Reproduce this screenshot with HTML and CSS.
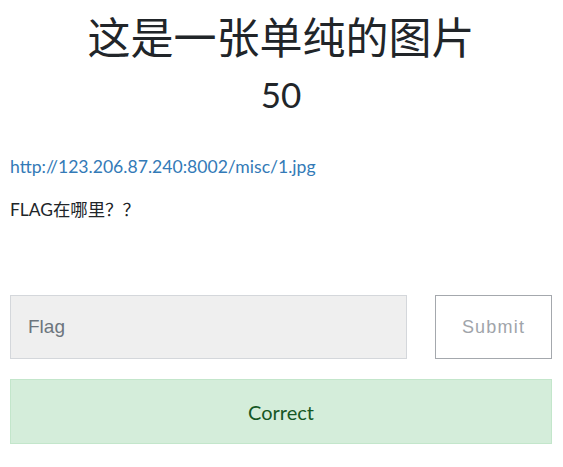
FILE: index.html
```html
<!DOCTYPE html>
<html lang="zh">
<head>
<meta charset="utf-8">
<title>Challenge</title>
<link rel="stylesheet" href="styles.css">
</head>
<body>
<div class="page">
  <h1 class="title">这是一张单纯的图片</h1>
  <div class="points">50</div>
  <p class="desc"><a class="link" href="#">http://123.206.87.240:8002/misc/1.jpg</a></p>
  <p class="hint">FLAG在哪里？？</p>
  <div class="form-row">
    <input class="flag-input" type="text" placeholder="Flag">
    <button class="submit-btn" type="button">Submit</button>
  </div>
  <div class="alert">Correct</div>
</div>
</body>
</html>
```
FILE: styles.css
```css
* { box-sizing: border-box; }
html, body { margin: 0; padding: 0; background: #fff; }
body {
  font-family: Lato, "Noto Sans CJK SC", sans-serif;
  color: #212529;
}
.page {
  padding: 13px 11px 0 10px;
  display: flex;
  flex-direction: column;
}
.title {
  margin: 0;
  text-align: center;
  font-weight: 400;
  font-size: 43px;
  line-height: 50px;
  color: #212529;
}
.points {
  text-align: center;
  font-size: 35px;
  line-height: 40px;
  margin-top: 11px;
  font-weight: 400;
}
.desc {
  margin: 41px 0 0;
  font-size: 17.6px;
  line-height: 24px;
}
.link {
  color: #337ab7;
  text-decoration: none;
}
.hint {
  margin: 21px 0 0;
  font-size: 17.4px;
  line-height: 20px;
}
.form-row {
  margin-top: 75px;
  display: flex;
  gap: 28px;
}
.flag-input {
  width: 397px;
  height: 64px;
  background: #efefef;
  border: 1px solid #d4d7db;
  border-radius: 0;
  padding: 0 17px;
  font-family: "Liberation Sans", Arial, sans-serif;
  font-size: 19px;
  color: #6c757d;
  outline: none;
}
.flag-input::placeholder { color: #6c757d; opacity: 1; }
.submit-btn {
  width: 117px;
  height: 64px;
  background: #fff;
  border: 1px solid #a4a8ad;
  border-radius: 0;
  font-family: "Liberation Sans", Arial, sans-serif;
  font-size: 18px;
  letter-spacing: 1.2px;
  color: #a0a4aa;
  padding: 0;
}
.alert {
  margin-top: 20px;
  height: 65px;
  display: flex;
  align-items: center;
  justify-content: center;
  background: #d4edda;
  border: 1px solid #c3e6cb;
  color: #155724;
  font-size: 20px;
}
```
